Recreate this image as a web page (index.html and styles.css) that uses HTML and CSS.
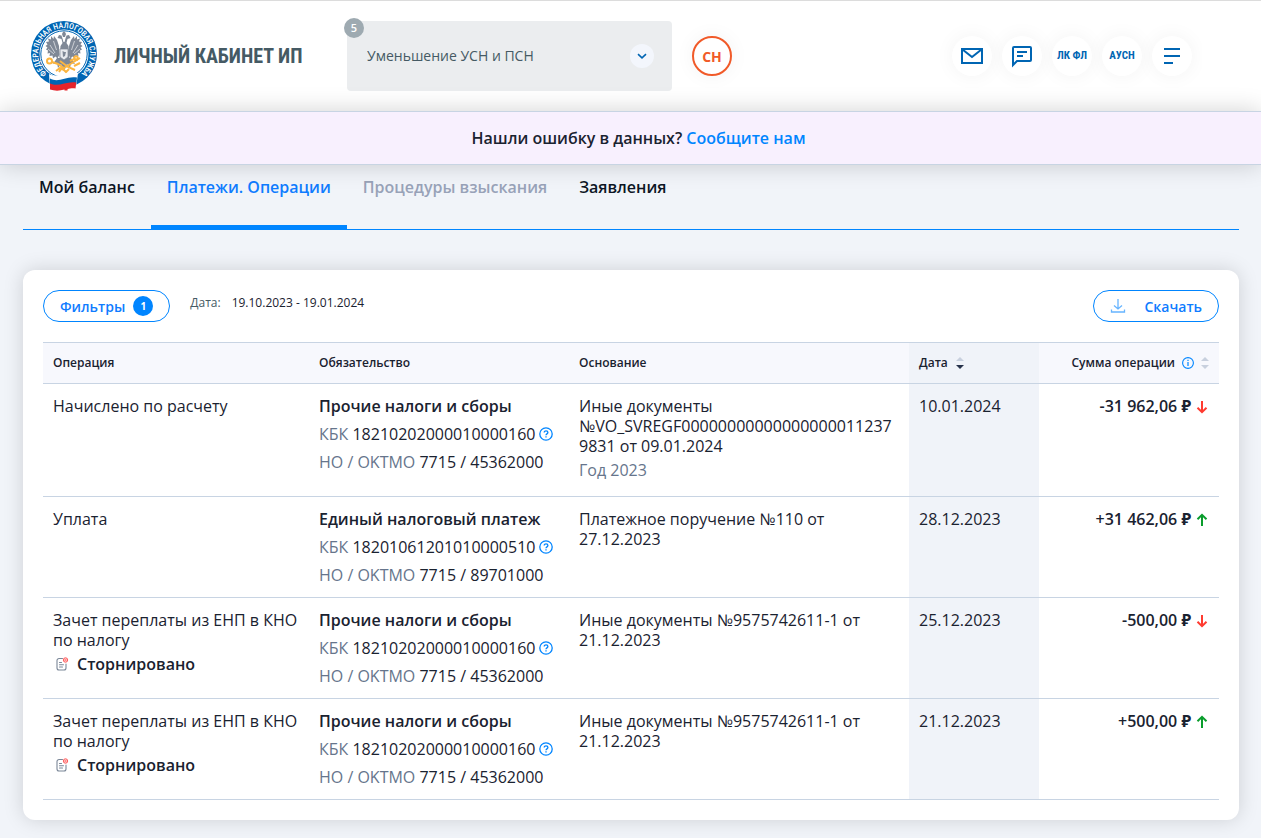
FILE: index.html
```html
<!DOCTYPE html>
<html lang="ru">
<head>
<meta charset="utf-8">
<title>Личный кабинет ИП</title>
<link rel="stylesheet" href="styles.css">
</head>
<body>
<svg class="sprite" aria-hidden="true">
  <symbol id="help" viewBox="0 0 14 14"><circle cx="7" cy="7" r="6.200" fill="none" stroke="#0085ff" stroke-width="1.300"/><path d="M5.200 5.600c0-2.300 3.700-2.200 3.700 0 0 1.300-1.900 1.300-1.900 2.600M7 9.200v1.300" fill="none" stroke="#0085ff" stroke-width="1.300"/></symbol>
  <symbol id="arrow" viewBox="0 0 12 14"><path d="M6 1v11M1.500 7.800L6 12.200l4.500-4.400" fill="none" stroke="currentColor" stroke-width="2"/></symbol>
  <symbol id="sort" viewBox="0 0 8 14"><path class="sort-up" d="M0 5L4 1l4 4z"/><path class="sort-down" d="M0 9l4 4 4-4z"/></symbol>
  <symbol id="storno" viewBox="0 0 14 14"><path d="M7.500 1.500H4a2 2 0 0 0-2 2v7.500a2 2 0 0 0 2 2h5a2 2 0 0 0 2-2V7M4.500 5.500h2M4.500 7.800h4M4.500 10h3" fill="none" stroke="#7b8798" stroke-width="1.100" stroke-linecap="round"/><circle cx="10.500" cy="3" r="2.200" fill="#ffd9d9" stroke="#ff5c5c"/><path d="M9.500 3h2" stroke="#ff4040"/></symbol>
</svg>

<header class="header">
  <a class="brand" href="#">
    <svg class="emblem" viewBox="0 0 68 72" role="img" aria-label="ФНС России">
      <circle cx="34" cy="34" r="33" fill="#0065b3"/>
      <circle cx="34" cy="34" r="24.500" fill="#fff"/>
      <circle cx="34" cy="34" r="23.200" fill="none" stroke="#0065b3" stroke-width="1"/>
      <path id="ring" d="M15.600 52.400A26 26 0 1 1 52.400 52.400" fill="none"/>
      <text class="ring-text" text-anchor="middle"><textPath href="#ring" startOffset="50%">ФЕДЕРАЛЬНАЯ НАЛОГОВАЯ СЛУЖБА</textPath></text>
      <g fill="#7f8896">
        <path d="M32 14l1-2h.5v-1h1v1h.5l1 2-1 3h-2zM27.500 18l1.500-3 2.500.500 1 3 1 3.500h1l1-3.500 1-3 2.500-.500 1.500 3-3 1-1 4 2 3 1 12-5 5-5-5 1-12 2-3-1-4z"/>
        <path d="M29 26l-2-6-3-4-.500 3-2.500-3v3.500l-3-1 1 3-3 .500 1.500 2.500-2 1.500 2 1.500-1.500 2 2 1-.500 3 2.500-.500-.500 3 3-.500.500 3 2.500-2 2 2 2-4z"/>
        <path d="M39 26l2-6 3-4 .500 3 2.500-3v3.500l3-1-1 3 3 .500-1.500 2.500 2 1.500-2 1.500 1.500 2-2 1 .500 3-2.500-.500.500 3-3-.500-.500 3-2.500-2-2 2-2-4z"/>
        <path d="M27 38l-4 6 4-1 1 5 3-4 3 7 3-7 3 4 1-5 4 1-4-6z"/>
      </g>
      <path d="M20 25l5 8M18 29l6 5M48 25l-5 8M50 29l-6 5M23.500 21l3 9M44.500 21l-3 9" stroke="#fff" stroke-width=".6"/>
      <path d="M30 29h8v8l-4 3-4-3z" fill="#e8eaee" stroke="#7f8896" stroke-width=".7"/>
      <path d="M32.500 31l2 1h1.500l-1 4-2 1z" fill="#7f8896"/>
      <g fill="none" stroke="#fbb540" stroke-width="2">
        <circle cx="19.500" cy="41" r="2.500"/>
        <path d="M22 42l6 2 6 4 8-5 8-5M26 51l4-3 7 4M30 41l8 6 7 3M40 41l4-2 4 1M44 46l6-3M29 52l3-4 4 4 3-3"/>
        <circle cx="46" cy="38" r="1.800"/>
      </g>
      <path d="M19 54c9 5 18-4 29-1l-2 15c-8-1-16 3-26 0z" fill="#fff"/>
      <path d="M20 58.500c9 5 16-3 27-1l-.7 6c-9-2-17 5-26.300 1z" fill="#0065b3"/>
      <path d="M20 63.500c9 4 17-3 26.300-1l-.8 6c-3-.500-6 0-8 .8v1.200h-3v-1c-5 1.500-10 1.500-14.500 0z" fill="#e6242b"/>
    </svg>
    <span class="brand-name">ЛИЧНЫЙ КАБИНЕТ ИП</span>
  </a>
  <div class="picker">
    <select class="picker-select" aria-label="Раздел"><option>Уменьшение УСН и ПСН</option></select>
    <span class="picker-count">5</span>
    <svg class="picker-chevron" viewBox="0 0 24 24" aria-hidden="true"><circle cx="12" cy="12" r="12" fill="#f3f6fc"/><path d="M8 10.200l4 3.600 4-3.600" fill="none" stroke="#0065b3" stroke-width="1.600"/></svg>
  </div>
  <button class="avatar">СН</button>
  <nav class="tools">
    <button class="tool" aria-label="Сообщения"><svg width="24" height="24" viewBox="0 0 24 24"><path d="M2 5h20v14H2zM2.500 5.500L12 13l9.500-7.500" fill="none" stroke="#0065b3" stroke-width="2"/></svg></button>
    <button class="tool" aria-label="Чат"><svg width="24" height="24" viewBox="0 0 24 24"><path d="M3 21V4q0-1 1-1h16q1 0 1 1v12q0 1-1 1H7zM7 8h10M7 12h6" fill="none" stroke="#0065b3" stroke-width="2"/></svg></button>
    <button class="tool">ЛК ФЛ</button>
    <button class="tool">АУСН</button>
    <button class="tool" aria-label="Меню"><svg width="24" height="24" viewBox="0 0 24 24"><path d="M4 5h16M4 12h16M4 19h9" fill="none" stroke="#0065b3" stroke-width="2"/></svg></button>
    <span class="tool-end"></span>
  </nav>
</header>

<div class="notice">Нашли ошибку в данных? <a href="#">Сообщите нам</a></div>

<main class="content">
  <nav class="tabs">
    <a class="tab" href="#">Мой баланс</a>
    <a class="tab tab-active" href="#" aria-current="page">Платежи. Операции</a>
    <a class="tab tab-disabled" href="#" aria-disabled="true">Процедуры взыскания</a>
    <a class="tab" href="#">Заявления</a>
  </nav>

  <section class="card">
    <div class="toolbar">
      <button class="pill">Фильтры <span class="pill-count">1</span></button>
      <div class="period"><span class="period-label">Дата:</span><span>19.10.2023 - 19.01.2024</span></div>
      <button class="pill pill-download"><svg width="16" height="16" viewBox="0 0 16 16" aria-hidden="true"><path d="M8 1v10M4 7.500L8 11l4-3.500M1.500 11.500v2.500h13v-2.500" fill="none" stroke="#66b4ff" stroke-width="1.300"/></svg>Скачать</button>
    </div>
    <table class="ops">
      <colgroup><col class="c-op"><col class="c-duty"><col class="c-base"><col class="c-date"><col class="c-sum"></colgroup>
      <thead>
        <tr>
          <th>Операция</th><th>Обязательство</th><th>Основание</th>
          <th class="date"><span class="head-line">Дата <svg class="sort sorted" width="8" height="14"><use href="#sort"/></svg></span></th>
          <th><span class="head-line head-end">Сумма операции <svg class="info" width="12" height="12" viewBox="0 0 12 12"><circle cx="6" cy="6" r="5.400" fill="none" stroke="#0085ff" stroke-width="1.100"/><path d="M6 5v4M6 2.800V4" stroke="#0085ff" stroke-width="1.200"/></svg><svg class="sort" width="8" height="14"><use href="#sort"/></svg></span></th>
        </tr>
      </thead>
      <tbody>
        <tr>
          <td>Начислено по расчету</td>
          <td><div class="duty"><b>Прочие налоги и сборы</b><span class="code"><span><i>КБК</i> 18210202000010000160</span><svg width="14" height="14"><use href="#help"/></svg></span><span><i>НО / OKTMO</i> 7715 / 45362000</span></div></td>
          <td>Иные документы №VO_SVREGF000000000000000000112379831 от 09.01.2024<div class="year">Год 2023</div></td>
          <td class="date">10.01.2024</td>
          <td class="sum">-31 962,06 <b>₽</b><svg class="down" width="12" height="14"><use href="#arrow"/></svg></td>
        </tr>
        <tr>
          <td>Уплата</td>
          <td><div class="duty"><b>Единый налоговый платеж</b><span class="code"><span><i>КБК</i> 18201061201010000510</span><svg width="14" height="14"><use href="#help"/></svg></span><span><i>НО / OKTMO</i> 7715 / 89701000</span></div></td>
          <td>Платежное поручение №110 от 27.12.2023</td>
          <td class="date">28.12.2023</td>
          <td class="sum">+31 462,06 <b>₽</b><svg class="up" width="12" height="14"><use href="#arrow"/></svg></td>
        </tr>
        <tr>
          <td>Зачет переплаты из ЕНП в КНО по налогу<div class="storno"><svg width="14" height="14"><use href="#storno"/></svg>Сторнировано</div></td>
          <td><div class="duty"><b>Прочие налоги и сборы</b><span class="code"><span><i>КБК</i> 18210202000010000160</span><svg width="14" height="14"><use href="#help"/></svg></span><span><i>НО / OKTMO</i> 7715 / 45362000</span></div></td>
          <td>Иные документы №9575742611-1 от 21.12.2023</td>
          <td class="date">25.12.2023</td>
          <td class="sum">-500,00 <b>₽</b><svg class="down" width="12" height="14"><use href="#arrow"/></svg></td>
        </tr>
        <tr>
          <td>Зачет переплаты из ЕНП в КНО по налогу<div class="storno"><svg width="14" height="14"><use href="#storno"/></svg>Сторнировано</div></td>
          <td><div class="duty"><b>Прочие налоги и сборы</b><span class="code"><span><i>КБК</i> 18210202000010000160</span><svg width="14" height="14"><use href="#help"/></svg></span><span><i>НО / OKTMO</i> 7715 / 45362000</span></div></td>
          <td>Иные документы №9575742611-1 от 21.12.2023</td>
          <td class="date">21.12.2023</td>
          <td class="sum">+500,00 <b>₽</b><svg class="up" width="12" height="14"><use href="#arrow"/></svg></td>
        </tr>
      </tbody>
    </table>
  </section>
</main>
</body>
</html>
```

FILE: styles.css
```css
* { box-sizing: border-box; }
body {
  margin: 0;
  background: #f1f4f9;
  color: #1a2230;
  font: 400 16px/20px "Open Sans", "Noto Sans", sans-serif;
}
a { text-decoration: none; }
button { font-family: inherit; cursor: pointer; }
.sprite { display: none; }

.header {
  display: flex;
  align-items: center;
  height: 111px;
  padding: 0 20px 0 30px;
  background: #fff;
  border-top: 1px solid #dcdcdc;
}
.brand { display: flex; align-items: center; gap: 16px; width: 317px; }
.emblem { width: 68px; height: 72px; }
.ring-text { font: 500 8px "Roboto Condensed", "Roboto", sans-serif; fill: #fff; }
.brand-name {
  color: #455a64;
  font: 700 20px/28px "Roboto Condensed", "Roboto", sans-serif;
  white-space: nowrap;
}
.picker { position: relative; width: 325px; }
.picker-select {
  display: block;
  width: 100%;
  height: 70px;
  padding: 0 60px 0 20px;
  appearance: none;
  border: 0;
  border-radius: 4px;
  background: #ebedef;
  color: #455a64;
  font: 400 14px/20px "Open Sans", "Noto Sans", sans-serif;
}
.picker-count {
  position: absolute;
  top: -3px;
  left: -3px;
  width: 20px;
  height: 20px;
  border-radius: 50%;
  background: #9eaab1;
  color: #fff;
  font-size: 11px;
  font-weight: 600;
  text-align: center;
}
.picker-chevron { position: absolute; top: 23px; right: 18px; width: 24px; height: 24px; pointer-events: none; }
.avatar {
  width: 40px;
  height: 40px;
  margin-left: 20px;
  padding: 0;
  border: 2px solid #f15a29;
  border-radius: 50%;
  background: #fff;
  color: #f15a29;
  font-size: 14px;
  font-weight: 700;
  box-shadow: 0 0 20px rgba(0, 0, 0, .05);
}
.tools { display: flex; gap: 10px; margin-left: auto; }
.tool {
  display: flex;
  align-items: center;
  justify-content: center;
  width: 40px;
  height: 40px;
  padding: 0;
  border: 0;
  border-radius: 50%;
  background: #fff;
  color: #0065b3;
  font: 700 11px/16px "Roboto Condensed", "Roboto", sans-serif;
  white-space: nowrap;
  box-shadow: 0 0 20px rgba(0, 0, 0, .05);
}
.tool-end { width: 39px; background: #fff; }

.notice {
  position: relative;
  padding: 16px 0 16px 16px;
  border: solid #c8d4e3;
  border-width: 1px 0;
  background: #f8f0fe;
  color: #1a2230;
  font-weight: 600;
  text-align: center;
  box-shadow: 0 0 24px rgba(0, 0, 0, .18);
}
.notice a { color: #0085ff; }

.content { padding: 0 22px 18px 23px; }
.tabs { display: flex; height: 65px; margin-bottom: 40px; border-bottom: 1px solid #0085ff; }
.tab {
  height: 65px;
  padding: 12px 16px 0;
  color: #0d1625;
  font-weight: 600;
}
.tab-active { border-bottom: 5px solid #0085ff; color: #0f7cff; }
.tab-disabled { color: #98a2b8; }

.card {
  padding: 20px;
  border-radius: 12px;
  background: #fff;
  box-shadow: 0 0 20px rgba(0, 0, 0, .15);
}
.toolbar { display: flex; align-items: flex-start; gap: 20px; margin-bottom: 20px; }
.pill {
  display: flex;
  align-items: center;
  gap: 8px;
  height: 32px;
  padding: 0 16px;
  border: 1px solid #0085ff;
  border-radius: 16px;
  background: #fff;
  color: #0f7cff;
  font-size: 14px;
  font-weight: 600;
}
.pill-count {
  width: 20px;
  border-radius: 50%;
  background: #0085ff;
  color: #fff;
  font-size: 10px;
  font-weight: 700;
  line-height: 20px;
}
.pill-download { gap: 18px; margin-left: auto; }
.period { display: flex; gap: 11px; padding-top: 3px; font-size: 12px; }
.period-label { color: #455a64; }

.ops { width: 100%; border-collapse: separate; border-spacing: 0; table-layout: fixed; }
.c-op { width: 266px; }
.c-duty { width: 260px; }
.c-date { width: 130px; }
.c-sum { width: 180px; }
.ops th {
  padding: 10px;
  border: solid #c8d4e3;
  border-width: 1px 0;
  background: #f7f8fd;
  font-size: 12px;
  font-weight: 600;
  text-align: left;
}
.ops td {
  padding: 12px 10px;
  border-bottom: 1px solid #c8d4e3;
  vertical-align: top;
  overflow-wrap: anywhere;
}
.ops .date { background: #f0f3f9; }
.head-line { display: flex; align-items: center; gap: 8px; }
.head-end { justify-content: flex-end; gap: 7px; }
.sort { fill: #c8d0de; }
.sorted { --down: #26324b; }
.sort-down { fill: var(--down, #c8d0de); }
.duty { display: flex; flex-direction: column; gap: 8px; }
.duty b { font-weight: 600; }
.duty i { color: #66758c; font-style: normal; }
.code { display: flex; align-items: center; gap: 4px; white-space: nowrap; }
.year { margin: 4px 0; color: #66758c; }
.storno { display: flex; align-items: center; gap: 8px; margin-top: 4px; padding-left: 2px; font-weight: 600; }
.ops .sum { padding-right: 11px; font-weight: 600; text-align: right; }
.sum b { font-weight: 700; }
.sum svg { margin-left: 5px; vertical-align: -2px; }
.down { color: #ff3b30; }
.up { color: #0a9d2c; transform: rotate(180deg); }
```
